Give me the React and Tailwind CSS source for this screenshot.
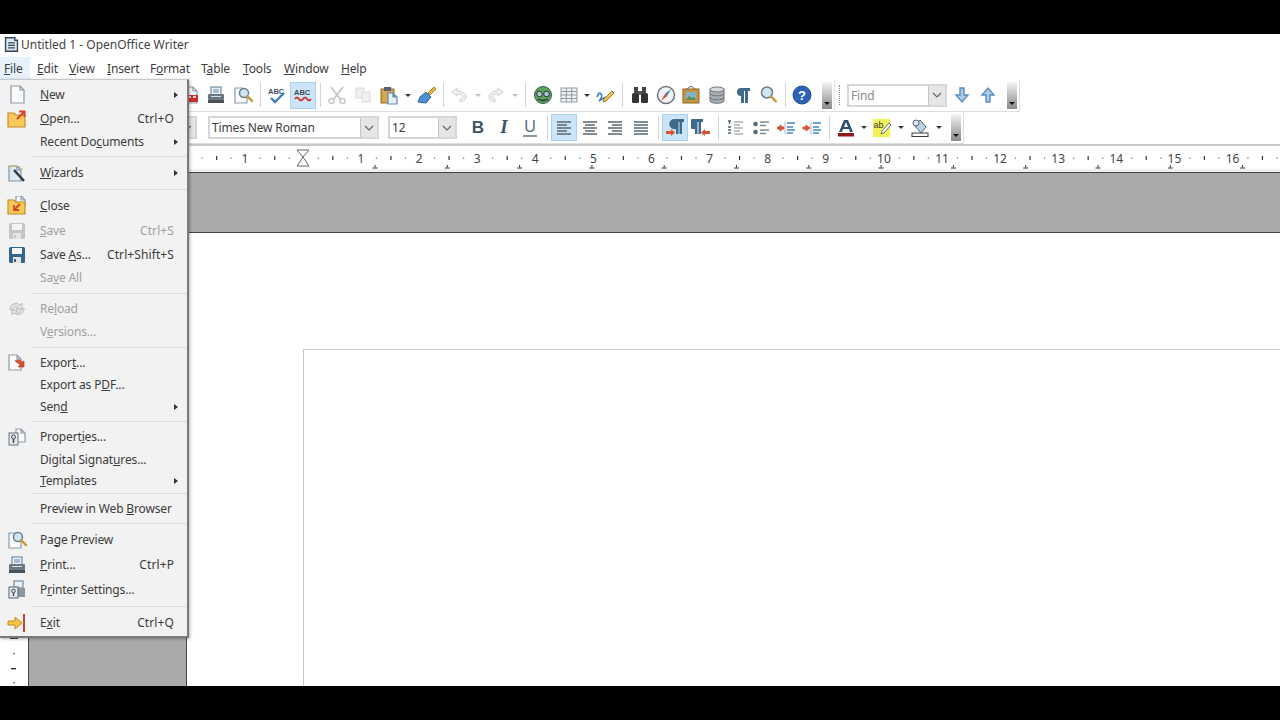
import React from 'react';

// ---- small drawn icons, all on a 20x20 box ----
const Ico = ({ children, className = 'w-5 h-5' }) => (
  <svg viewBox="0 0 20 20" className={className} fill="none">{children}</svg>
);

const Page = ({ x = 4, y = 2, w = 12, h = 16, s = '#8c9bab', f = '#fafafa' }) => (
  <path d={`M${x} ${y}h${w - 4}l4 4v${h - 4}h-${w}z M${x + w - 4} ${y}v4h4`} stroke={s} fill={f} strokeWidth="1.2" />
);

const Printer = ({ c = '#6d7780' }) => (
  <>
    <rect x="5" y="2" width="10" height="8" fill="#eef2f6" stroke="#5c7690" />
    <path d="M7 5h6M7 7h6" stroke="#5c88b0" />
    <rect x="2" y="9" width="16" height="6" rx="1" fill={c} />
    <rect x="2" y="15" width="16" height="3" fill="#4a5157" />
    <rect x="5" y="11" width="10" height="1" fill="#d8dde2" />
  </>
);

const Lens = ({ cx = 11, cy = 8, r = 4.5 }) => (
  <>
    <circle cx={cx} cy={cy} r={r} fill="#cfe6f7" stroke="#6b7c8a" strokeWidth="1.5" />
    <path d={`M${cx + r * 0.7} ${cy + r * 0.7}l5 5`} stroke="#c99a35" strokeWidth="2.4" strokeLinecap="round" />
  </>
);

const Folder = () => (
  <path d="M1 4h6l2 2h9v12H1z" fill="#f6c95a" stroke="#c08a22" strokeWidth="1.1" />
);

const Floppy = ({ c }) => (
  <>
    <rect x="2" y="2" width="16" height="16" rx="1.5" fill={c} />
    <rect x="5" y="3" width="10" height="6" fill="#f4f4f4" />
    <rect x="6" y="12" width="8" height="6" fill="#e4e4e4" />
    <rect x="7" y="14" width="2" height="3" fill={c} />
  </>
);

const Lines = ({ d }) => <path d={d} stroke="#5b6670" strokeWidth="1.5" />;

const icons = {
  new: <Ico><Page x={4} y={1} w={13} h={17} /></Ico>,
  open: (
    <Ico>
      <Folder />
      <path d="M10 10l7-7M12 2.500h5.500V8" stroke="#d8432b" strokeWidth="2" />
    </Ico>
  ),
  wizard: (
    <Ico>
      <Page x={2} y={3} w={12} h={15} s="#7d93a8" f="#dbe8f2" />
      <path d="M7 7l10 11" stroke="#333" strokeWidth="2.4" />
      <path d="M3 3l1 1M8 2v2M13 3l-1 2M16 6h-2" stroke="#e5b52e" strokeWidth="1.2" />
    </Ico>
  ),
  close: (
    <Ico>
      <Page x={9} y={0} w={9} h={10} />
      <Folder />
      <path d="M13 8l-6 6M7 9v5h5" stroke="#d8432b" strokeWidth="1.8" />
    </Ico>
  ),
  saveOff: <Ico><Floppy c="#c3c6c8" /></Ico>,
  saveAs: <Ico><Floppy c="#33658f" /></Ico>,
  reload: (
    <Ico>
      <path d="M3 11a6 6 0 0 1 10-5l2-2v6h-6l2-2a3.500 3.500 0 0 0-5 3zM17 9a6 6 0 0 1-10 5l-2 2v-5h6l-2 2a3.500 3.500 0 0 0 5-3z" fill="#e2e2e2" stroke="#bdbdbd" />
    </Ico>
  ),
  export: (
    <Ico>
      <Page x={2} y={2} w={12} h={15} />
      <path d="M8 8c3-2 6-1 7 1l2-1v6h-6l2-2c-1-2-3-2-5-4z" fill="#d9542b" stroke="#a8381a" strokeWidth=".6" />
    </Ico>
  ),
  props: (
    <Ico>
      <Page x={9} y={2} w={9} h={13} />
      <rect x="2" y="6" width="9" height="12" fill="#e6eaee" stroke="#66727d" />
      <circle cx="6.500" cy="10" r="2" stroke="#444" />
      <path d="M6.500 12v4" stroke="#444" strokeWidth="1.5" />
    </Ico>
  ),
  pagePreview: (
    <Ico>
      <Page x={2} y={3} w={12} h={15} />
      <Lens cx={11} cy={7} />
    </Ico>
  ),
  print: <Ico><Printer /></Ico>,
  printerSet: (
    <Ico>
      <rect x="7" y="1" width="9" height="7" fill="#eef2f6" stroke="#5c7690" />
      <rect x="8" y="8" width="10" height="9" fill="#8d979f" />
      <rect x="2" y="7" width="9" height="11" fill="#e6eaee" stroke="#56626c" />
      <circle cx="6.500" cy="11" r="1.800" stroke="#444" />
      <path d="M6.500 13v3" stroke="#444" strokeWidth="1.4" />
    </Ico>
  ),
  exit: (
    <Ico>
      <path d="M1 8h7V4l7 6-7 6v-4H1z" fill="#f5c542" stroke="#c78a1c" />
      <rect x="16" y="1" width="2" height="18" fill="#c9452c" />
    </Ico>
  ),

  pdf: (
    <Ico>
      <Page x={3} y={2} w={14} h={16} />
      <rect x="2" y="10" width="16" height="7" fill="#c9302c" />
      <path d="M4 12h3M9 12h2M13 12h3" stroke="#fff" strokeWidth="1.4" />
    </Ico>
  ),
  printer: <Ico><Printer /></Ico>,
  preview: (
    <Ico>
      <Page x={2} y={3} w={12} h={15} />
      <Lens cx={11} cy={8} />
    </Ico>
  ),
  spell: (
    <Ico>
      <text x="1" y="9" fontSize="7.500" fontWeight="700" fontFamily="Liberation Sans, sans-serif" fill="#3f4f5f">ABC</text>
      <path d="M4 13l4 4 9-9" stroke="#3a7fc0" strokeWidth="2.4" />
    </Ico>
  ),
  autoSpell: (
    <Ico>
      <text x="1" y="10" fontSize="7.500" fontWeight="700" fontFamily="Liberation Sans, sans-serif" fill="#3f4f5f">ABC</text>
      <path d="M2 14q2-3 4 0t4 0 4 0 4 0" stroke="#cf3a32" strokeWidth="1.8" />
    </Ico>
  ),
  cut: (
    <Ico>
      <path d="M4 2l10 13M16 2L6 15" stroke="#c9c9c9" strokeWidth="2" />
      <circle cx="4.500" cy="16" r="2.500" stroke="#c9c9c9" strokeWidth="1.500" />
      <circle cx="15.500" cy="16" r="2.500" stroke="#c9c9c9" strokeWidth="1.500" />
    </Ico>
  ),
  copy: (
    <Ico>
      <rect x="3" y="3" width="8" height="10" fill="#f0f0f0" stroke="#d8d8d8" />
      <rect x="9" y="7" width="8" height="10" fill="#f0f0f0" stroke="#d8d8d8" />
    </Ico>
  ),
  paste: (
    <Ico>
      <rect x="2" y="4" width="13" height="14" fill="#d6a84e" stroke="#8e6b28" />
      <rect x="5" y="2" width="7" height="4" fill="#586570" />
      <Page x={9} y={8} w={9} h={11} s="#5a8cb8" f="#e8f1f8" />
    </Ico>
  ),
  brush: (
    <Ico>
      <path d="M9 7l5 5-5 6-8-1 2-5z" fill="#4c8fd0" stroke="#2f6aa3" />
      <path d="M11 8l6-6 2 2-6 6z" fill="#e5b84a" stroke="#a37f24" />
    </Ico>
  ),
  undo: (
    <Ico>
      <path d="M3 7l5-4v3c6 0 9 3 9 6 0 3-3 5-6 5v-3c2 0 3-1 3-2s-2-3-6-3v2z" fill="#f1f1f1" stroke="#d2d2d2" />
    </Ico>
  ),
  redo: (
    <Ico>
      <path d="M17 7l-5-4v3c-6 0-9 3-9 6 0 3 3 5 6 5v-3c-2 0-3-1-3-2s2-3 6-3v2z" fill="#f1f1f1" stroke="#d2d2d2" />
    </Ico>
  ),
  globe: (
    <Ico>
      <circle cx="10" cy="10" r="8.500" fill="#59a45c" stroke="#3a5d48" />
      <circle cx="6.500" cy="9" r="2.800" fill="#a9c7d8" stroke="#333" />
      <circle cx="13.500" cy="9" r="2.800" fill="#a9c7d8" stroke="#333" />
      <path d="M5 14q5 3 10 0" stroke="#333" strokeWidth="1.4" />
    </Ico>
  ),
  table: (
    <Ico>
      <rect x="2" y="3" width="16" height="14" fill="#eef2f5" stroke="#8d9ba8" />
      <path d="M2 6.500h16M2 10h16M2 13.500h16M7.300 3v14M12.600 3v14" stroke="#8d9ba8" />
    </Ico>
  ),
  draw: (
    <Ico>
      <path d="M2 12q2-6 4-3t-2 7q5-3 7-4" stroke="#3d7ec0" strokeWidth="1.6" />
      <path d="M9 14l8-8 2 2-8 8-3 1z" fill="#eec650" stroke="#a17d22" />
    </Ico>
  ),
  binoc: (
    <Ico>
      <rect x="2" y="8" width="7" height="10" rx="1.500" fill="#333" />
      <rect x="11" y="8" width="7" height="10" rx="1.500" fill="#333" />
      <rect x="4" y="2" width="4" height="7" fill="#444" />
      <rect x="12" y="2" width="4" height="7" fill="#444" />
      <rect x="8" y="6" width="4" height="4" fill="#555" />
    </Ico>
  ),
  navigator: (
    <Ico>
      <circle cx="10" cy="10" r="8.500" fill="#f2f2f2" stroke="#6d7680" strokeWidth="1.5" />
      <path d="M15 4l-4 7-2-2z" fill="#3a73b8" />
      <path d="M5 16l4-7 2 2z" fill="#d8432b" />
    </Ico>
  ),
  gallery: (
    <Ico>
      <path d="M6 4l4-3 4 3" stroke="#6b5a3c" />
      <rect x="2" y="4" width="16" height="14" fill="#c99440" stroke="#8a6425" />
      <rect x="5" y="7" width="10" height="8" fill="#7fb2c8" />
      <path d="M5 15l3-4 3 2 2-1 2 3z" fill="#5e8f4a" />
    </Ico>
  ),
  database: (
    <Ico>
      <path d="M3 4v12c0 3 14 3 14 0V4z" fill="#a9aeb3" stroke="#70767c" />
      <ellipse cx="10" cy="4.500" rx="7" ry="2.500" fill="#d5d8da" stroke="#70767c" />
      <path d="M3 8.500c0 3 14 3 14 0M3 12.500c0 3 14 3 14 0" stroke="#70767c" />
    </Ico>
  ),
  pilcrow: (
    <Ico>
      <path d="M8 3h9v3h-2v12h-3V6h-1v12H8v-7a4 4 0 0 1 0-8z" fill="#3f6a8c" />
    </Ico>
  ),
  zoom: <Ico><Lens cx={8} cy={7.500} r={5.500} /></Ico>,
  help: (
    <Ico>
      <circle cx="10" cy="10" r="9" fill="#2c63b4" stroke="#1d4a8c" />
      <text x="10" y="15" textAnchor="middle" fontSize="13" fontWeight="700" fontFamily="Liberation Sans, sans-serif" fill="#fff">?</text>
    </Ico>
  ),
  down: (
    <Ico>
      <path d="M8 3h4v7h4l-6 7-6-7h4z" fill="#a9cbe8" stroke="#5a8db8" strokeWidth="1.400" />
    </Ico>
  ),
  up: (
    <Ico>
      <path d="M8 17h4v-7h4l-6-7-6 7h4z" fill="#a9cbe8" stroke="#5a8db8" strokeWidth="1.400" />
    </Ico>
  ),
  bold: <span className="font-['Liberation_Sans',sans-serif] font-bold text-[17px] text-[#3f5566]">B</span>,
  italic: <span className="font-['Liberation_Serif',serif] italic font-bold text-[19px] text-[#3f5566]">I</span>,
  under: (
    <span className="font-['Liberation_Sans',sans-serif] text-[16px] leading-[17px] text-[#5c6f80] border-b-2 border-[#8a98a4] px-[1px]">U</span>
  ),
  left: <Ico><Lines d="M3 4h14M3 7h10M3 10h14M3 13h10M3 16h14" /></Ico>,
  center: <Ico><Lines d="M3 4h14M5 7h10M3 10h14M5 13h10M3 16h14" /></Ico>,
  right: <Ico><Lines d="M3 4h14M7 7h10M3 10h14M7 13h10M3 16h14" /></Ico>,
  justify: <Ico><Lines d="M3 4h14M3 7h14M3 10h14M3 13h14M3 16h14" /></Ico>,
  ltr: (
    <Ico>
      <path d="M8 1h11v3h-2v12h-2.500V4h-1v12H11v-5a5 5 0 0 1-3-10z" fill="#3f6a8c" />
      <path d="M1 13h5v-2l4 3.500L6 18v-2H1z" fill="#d8532f" />
    </Ico>
  ),
  rtl: (
    <Ico>
      <path d="M1 1h11v3h-2v12H7.500V4h-1v12H4v-5a5 5 0 0 1-3-10z" fill="#3f6a8c" />
      <path d="M19 13h-5v-2l-4 3.500 4 3.500v-2h5z" fill="#d8532f" />
    </Ico>
  ),
  numbering: (
    <Ico>
      <path d="M9 4h9M9 7h6M9 10h9M9 13h6M9 16h9" stroke="#7d8a95" strokeWidth="1.200" />
      <path d="M3 3h3M3 9h3M3 15h3M4.500 3v3M3 12h3" stroke="#4d6478" strokeWidth="1.300" />
    </Ico>
  ),
  bullets: (
    <Ico>
      <circle cx="4.500" cy="6" r="2.300" fill="#566a7c" />
      <circle cx="4.500" cy="14" r="2.300" fill="#566a7c" />
      <path d="M9 4h9M9 7.500h6M9 12h9M9 15.500h6" stroke="#7d8a95" strokeWidth="1.400" />
    </Ico>
  ),
  indentLess: (
    <Ico>
      <path d="M1 10l4-3v2h3v2H5v2z" fill="#d8532f" stroke="#d8532f" />
      <path d="M9 4v12" stroke="#aab4bc" />
      <path d="M11 5h8M11 9h6M11 12h8M11 15h6" stroke="#3f86c5" strokeWidth="1.500" />
    </Ico>
  ),
  indentMore: (
    <Ico>
      <path d="M8 10L4 7v2H1v2h3v2z" fill="#d8532f" stroke="#d8532f" />
      <path d="M9 4v12" stroke="#aab4bc" />
      <path d="M11 5h8M11 9h6M11 12h8M11 15h6" stroke="#3f86c5" strokeWidth="1.500" />
    </Ico>
  ),
  fontColor: (
    <Ico>
      <path d="M8 2h4l5 12h-3l-1-3H7l-1 3H3zM8 9h4l-2-5z" fill="#2e4f6f" fillRule="evenodd" />
      <rect x="2" y="15" width="16" height="3.500" fill="#8b1a1a" />
    </Ico>
  ),
  highlight: (
    <Ico>
      <rect x="1" y="1" width="17" height="18" fill="#f4f25a" />
      <text x="1.500" y="10" fontSize="9" fontFamily="Liberation Sans, sans-serif" fill="#3a3a3a">ab</text>
      <path d="M10 13l7-8 2 2-7 8-3 1z" fill="#f4f4f4" stroke="#66727d" />
    </Ico>
  ),
  charBg: (
    <Ico>
      <path d="M5 8l5-6 6 7-5 6z" fill="#bcd2e2" stroke="#4d6478" />
      <circle cx="6" cy="5" r="3" fill="#dfe8ee" stroke="#4d6478" />
      <rect x="2" y="15" width="16" height="3.500" fill="#fff" stroke="#3a3a3a" />
    </Ico>
  ),
};

const menuItems = [
  { icon: 'new', pre: '', u: 'N', post: 'ew', arrow: true, h: 'h-[24px]' },
  { icon: 'open', pre: '', u: 'O', post: 'pen...', key: 'Ctrl+O', h: 'h-[24px]' },
  { pre: 'Recent Do', u: 'c', post: 'uments', arrow: true, h: 'h-[22px]' },
  { sep: true },
  { icon: 'wizard', pre: '', u: 'W', post: 'izards', arrow: true, h: 'h-[26px]' },
  { sep: true },
  { icon: 'close', pre: '', u: 'C', post: 'lose', h: 'h-[25px]' },
  { icon: 'saveOff', pre: '', u: 'S', post: 'ave', key: 'Ctrl+S', off: true, h: 'h-[26px]' },
  { icon: 'saveAs', pre: 'Save ', u: 'A', post: 's...', key: 'Ctrl+Shift+S', h: 'h-[22px]' },
  { pre: 'Sa', u: 'v', post: 'e All', off: true, h: 'h-[24px]' },
  { sep: true },
  { icon: 'reload', pre: 'Re', u: 'l', post: 'oad', off: true, h: 'h-[23px]' },
  { pre: 'V', u: 'e', post: 'rsions...', off: true, h: 'h-[24px]' },
  { sep: true },
  { icon: 'export', pre: 'Expor', u: 't', post: '...', h: 'h-[23px]' },
  { pre: 'Export as P', u: 'D', post: 'F...', h: 'h-[21px]' },
  { pre: 'Sen', u: 'd', post: '', arrow: true, h: 'h-[23px]' },
  { sep: true },
  { icon: 'props', pre: 'Propert', u: 'i', post: 'es...', h: 'h-[24px]' },
  { pre: 'Digital Signat', u: 'u', post: 'res...', h: 'h-[22px]' },
  { pre: '', u: 'T', post: 'emplates', arrow: true, h: 'h-[19px]' },
  { sep: true },
  { pre: 'Preview in Web ', u: 'B', post: 'rowser', h: 'h-[23px]' },
  { sep: true },
  { icon: 'pagePreview', pre: 'Pa', u: 'g', post: 'e Preview', h: 'h-[25px]' },
  { icon: 'print', pre: '', u: 'P', post: 'rint...', key: 'Ctrl+P', h: 'h-[25px]' },
  { icon: 'printerSet', pre: 'P', u: 'r', post: 'inter Settings...', h: 'h-[26px]' },
  { sep: true },
  { icon: 'exit', pre: 'E', u: 'x', post: 'it', key: 'Ctrl+Q', h: 'h-[25px]' },
];

function FileMenu() {
  return (
    <div className="absolute left-0 top-[79px] w-[189px] h-[559px] pt-[3px] bg-[#f2f2f2] border-r-2 border-b-2 border-[#7a7a7a] border-t border-t-[#c8c8c8] text-[12px] tracking-[-0.15px] z-10 shadow-[1px_1px_3px_rgba(0,0,0,0.3)]">
      {menuItems.map((m, i) =>
        m.sep ? (
          <div key={i} className="h-[7px] pl-[32px] flex items-center">
            <div className="h-px w-full bg-[#dcdcdc]" />
          </div>
        ) : (
          <div key={i} className={`${m.h} flex items-center ${m.off ? 'text-[#a0a0a0]' : 'text-[#3c3c3c]'}`}>
            <div className="w-[40px] pl-[7px] shrink-0 flex items-center">{m.icon && icons[m.icon]}</div>
            <span className="whitespace-pre">
              {m.pre}
              <u>{m.u}</u>
              {m.post}
            </span>
            <span className="ml-auto pr-[13px] tracking-[0.1px]">{m.key}</span>
            {m.arrow && (
              <span className="mr-[9px] w-0 h-0 border-y-[3px] border-y-transparent border-l-[4px] border-l-[#333]" />
            )}
          </div>
        )
      )}
    </div>
  );
}

const menuBar = [
  { pre: '', u: 'E', post: 'dit', w: 'w-[32px]' },
  { pre: '', u: 'V', post: 'iew', w: 'w-[38px]' },
  { pre: '', u: 'I', post: 'nsert', w: 'w-[43px]' },
  { pre: 'F', u: 'o', post: 'rmat', w: 'w-[51px]' },
  { pre: 'T', u: 'a', post: 'ble', w: 'w-[42px]' },
  { pre: '', u: 'T', post: 'ools', w: 'w-[41px]' },
  { pre: '', u: 'W', post: 'indow', w: 'w-[57px]' },
  { pre: '', u: 'H', post: 'elp', w: 'w-[40px]' },
];

// toolbar rows as flow items: width class, then what sits in it
const row1 = [
  { w: 'w-[177px]' },
  { w: 'w-[26px]', i: 'pdf' },
  { w: 'w-[26px]', i: 'printer' },
  { w: 'w-[27px]', i: 'preview' },
  { sep: 'w-[8px]' },
  { w: 'w-[26px]', i: 'spell' },
  { w: 'w-[26px]', i: 'autoSpell', on: true },
  { sep: 'w-[8px]' },
  { w: 'w-[26px]', i: 'cut' },
  { w: 'w-[26px]', i: 'copy' },
  { w: 'w-[26px]', i: 'paste' },
  { drop: 'w-[12px]' },
  { w: 'w-[26px]', i: 'brush' },
  { sep: 'w-[6px]' },
  { w: 'w-[26px]', i: 'undo' },
  { drop: 'w-[11px]', off: true },
  { w: 'w-[26px]', i: 'redo' },
  { drop: 'w-[11px]', off: true },
  { sep: 'w-[10px]' },
  { w: 'w-[26px]', i: 'globe' },
  { w: 'w-[25px]', i: 'table' },
  { drop: 'w-[11px]' },
  { w: 'w-[26px]', i: 'draw' },
  { sep: 'w-[9px]' },
  { w: 'w-[26px]', i: 'binoc' },
  { w: 'w-[25px]', i: 'navigator' },
  { w: 'w-[26px]', i: 'gallery' },
  { w: 'w-[26px]', i: 'database' },
  { w: 'w-[26px]', i: 'pilcrow' },
  { w: 'w-[25px]', i: 'zoom' },
  { sep: 'w-[8px]' },
  { w: 'w-[26px]', i: 'help' },
];

const row2a = [
  { w: 'w-[26px]', i: 'bold' },
  { w: 'w-[26px]', i: 'italic' },
  { w: 'w-[26px]', i: 'under' },
  { sep: 'w-[8px]' },
  { w: 'w-[26px]', i: 'left', on: true },
  { w: 'w-[25px]', i: 'center' },
  { w: 'w-[26px]', i: 'right' },
  { w: 'w-[26px]', i: 'justify' },
  { sep: 'w-[8px]' },
  { w: 'w-[26px]', i: 'ltr', on: true },
  { w: 'w-[26px]', i: 'rtl' },
  { sep: 'w-[8px]' },
  { w: 'w-[26px]', i: 'numbering' },
  { w: 'w-[25px]', i: 'bullets' },
  { w: 'w-[26px]', i: 'indentLess' },
  { w: 'w-[26px]', i: 'indentMore' },
  { sep: 'w-[8px]' },
  { w: 'w-[26px]', i: 'fontColor' },
  { drop: 'w-[10px]' },
  { w: 'w-[26px]', i: 'highlight' },
  { drop: 'w-[12px]' },
  { w: 'w-[26px]', i: 'charBg' },
  { drop: 'w-[11px]' },
];

function ToolItems({ items }) {
  return items.map((t, i) => {
    if (t.sep)
      return (
        <div key={i} className={`${t.sep} h-[24px] flex justify-center shrink-0`}>
          <div className="w-px h-full bg-[#d4d4d4]" />
        </div>
      );
    if (t.drop)
      return (
        <div key={i} className={`${t.drop} flex justify-center shrink-0`}>
          <span className={`w-0 h-0 border-x-[3px] border-x-transparent border-t-[3px] ${t.off ? 'border-t-[#c0c0c0]' : 'border-t-[#333]'}`} />
        </div>
      );
    return (
      <div key={i} className={`${t.w} h-[27px] shrink-0 flex items-center justify-center ${t.on ? 'bg-[#cce4f7] border border-[#a9d2f0]' : ''}`}>
        {t.i && icons[t.i]}
      </div>
    );
  });
}

function Handle() {
  return (
    <div className="w-[10px] h-[27px] shrink-0 flex items-end justify-center pb-[4px] bg-linear-to-b from-[#f4f4f4] to-[#8a8a8a]">
      <span className="w-0 h-0 border-x-[3px] border-x-transparent border-t-[3px] border-t-[#111]" />
    </div>
  );
}

function Combo({ w, text, grey }) {
  return (
    <div className={`${w} h-[23px] shrink-0 flex items-center border-2 border-[#d6d6d6] bg-white pl-[2px] text-[12px] tracking-[-0.15px] ${grey ? 'text-[#8a8a8a]' : 'text-[#3c3c3c]'}`}>
      <span className="flex-1 pt-px">{text}</span>
      <span className="w-[17px] h-full flex items-center justify-center bg-[#e6e6e6] border-l border-[#c4c4c4]">
        <svg viewBox="0 0 10 6" className="w-[10px] h-[6px]" fill="none">
          <path d="M1 1l4 4 4-4" stroke="#666" strokeWidth="1.200" />
        </svg>
      </span>
    </div>
  );
}

const cm = 58.1;
const rulerNums = [
  { n: 1, x: 245 }, ...Array.from({ length: 16 }, (_, i) => ({ n: i + 1, x: 361 + i * cm })),
];

function TopRuler() {
  const dots = [];
  for (let x = 187; x < 1280; x += cm / 4) {
    const k = Math.round((x - 187) / (cm / 4));
    // whole centimetres carry the number, the other quarter steps get ticks
    if (k % 4 === 0) continue;
    dots.push(
      <rect key={k} x={x} y={k % 2 === 0 ? 10 : 11.500} width="1.200" height={k % 2 === 0 ? 4 : 1.400} fill={k % 2 === 0 ? '#333' : '#777'} />
    );
  }
  return (
    <svg viewBox="0 0 1280 23" className="w-[1280px] h-[23px] block">
      {dots}
      {rulerNums.map((r, i) => (
        <text key={i} x={r.x} y="17" textAnchor="middle" fontSize="12" fontFamily="Noto Sans, sans-serif" fill="#444">{r.n}</text>
      ))}
      {Array.from({ length: 13 }, (_, i) => 375 + i * 72.3).map((x) => (
        <path key={x} d={`M${x} 19v2.500M${x - 2.500} 22h5`} stroke="#333" strokeWidth="1" />
      ))}
      <path d="M297 4h12l-6 7 6 9h-12l6-9z" fill="#fff" stroke="#666" />
    </svg>
  );
}

export default function App() {
  return (
    <div className="relative w-[1280px] h-[720px] overflow-hidden bg-black font-['Noto_Sans',sans-serif]">
      <div className="h-[34px]" />
      <div className="h-[652px] bg-white flex flex-col overflow-hidden">
        {/* title bar */}
        <div className="h-[23px] shrink-0 flex items-center pl-[3px] pb-[2px] text-[12px] text-[#444]">
          <Ico className="w-[17px] h-[17px] mr-[1px]">
            <path d="M3 2h11v3h3v13H3z" fill="#dbe6ee" stroke="#33475a" strokeWidth="1.600" />
            <path d="M6 8h8M6 11h8M6 14h8" stroke="#33475a" strokeWidth="1.400" />
          </Ico>
          Untitled 1 - OpenOffice Writer
        </div>

        {/* menu bar */}
        <div className="h-[23px] shrink-0 flex items-center text-[12px] tracking-[-0.15px] text-[#3c3c3c]">
          <div className="w-[30px] h-full mr-[3px] pl-[4px] pt-px flex items-center bg-[#e5f1fb]">
            <span><u>F</u>ile</span>
          </div>
          <div className="w-[4px]" />
          {menuBar.map((m) => (
            <div key={m.post} className={`${m.w} shrink-0 whitespace-pre pt-px`}>
              {m.pre}
              <u>{m.u}</u>
              {m.post}
            </div>
          ))}
        </div>

        {/* standard + find toolbar */}
        <div className="h-[32px] shrink-0 flex w-[1020px] items-center pb-px border-b border-r border-[#dedede]">
          <ToolItems items={row1} />
          <div className="w-[7px]" />
          <Handle />
          <div className="w-[2px]" />
          <div className="h-full border-l border-[#dedede] w-[13px] flex items-center pl-[4px] shrink-0">
            <div className="h-[20px] border-l border-dotted border-[#888]" />
          </div>
          <Combo w="w-[100px]" text="Find" grey />
          <div className="w-[2px]" />
          <div className="w-[26px] flex justify-center shrink-0">{icons.down}</div>
          <div className="w-[26px] flex justify-center shrink-0">{icons.up}</div>
          <div className="w-[6px]" />
          <Handle />
        </div>

        {/* formatting toolbar */}
        <div className="h-[32px] shrink-0 flex w-[964px] items-center border-b border-r border-[#dedede] pl-[8px]">
          <Combo w="w-[189px]" text="" />
          <div className="w-[11px]" />
          <Combo w="w-[171px]" text="Times New Roman" />
          <div className="w-[9px]" />
          <Combo w="w-[69px]" text="12" />
          <div className="w-[8px]" />
          <ToolItems items={row2a} />
          <div className="w-[7px]" />
          <Handle />
        </div>

        {/* horizontal ruler */}
        <div className="h-[2px] shrink-0 bg-[#c8c8c8]" />
        <div className="h-[26px] shrink-0 bg-white border-b-[3px] border-[#f0f0f0] overflow-hidden">
          <TopRuler />
        </div>
        <div className="h-[61px] shrink-0 bg-[#aaaaaa] border-y border-[#444]" />

        {/* document area */}
        <div className="flex-1 flex min-h-0">
          <div className="w-[28px] shrink-0 bg-white flex justify-center">
            <svg viewBox="0 0 10 453" className="w-[10px] h-[453px]">
              <rect x="1" y="403" width="8" height="3" fill="#444" />
              {[420, 435, 449].map((y, i) => (
                <rect key={y} x={i % 2 ? 2 : 4} y={y} width={i % 2 ? 5 : 2} height="1.300" fill={i % 2 ? '#222' : '#777'} />
              ))}
            </svg>
          </div>
          <div className="w-[159px] shrink-0 bg-[#aaaaaa] border-x border-[#444]" />
          <div className="flex-1 bg-white pl-[116px] pt-[116px]">
            <div className="h-full border-l border-t border-[#c8c8c8]" />
          </div>
        </div>
      </div>
      <div className="h-[34px]" />
      <FileMenu />
    </div>
  );
}
